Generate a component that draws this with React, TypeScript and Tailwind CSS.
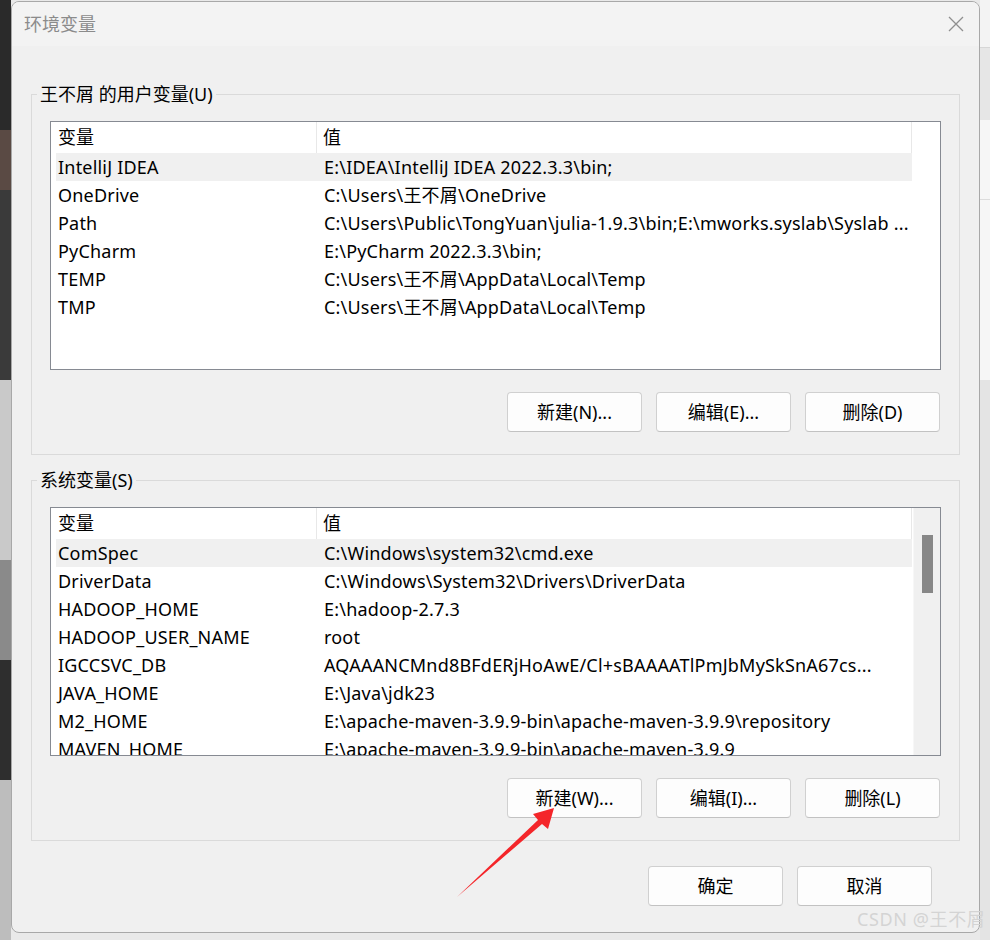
import React from "react"

const userVars: [string, string][] = [
    ["IntelliJ IDEA", "E:\\IDEA\\IntelliJ IDEA 2022.3.3\\bin;"],
    ["OneDrive", "C:\\Users\\王不屑\\OneDrive"],
    ["Path", "C:\\Users\\Public\\TongYuan\\julia-1.9.3\\bin;E:\\mworks.syslab\\Syslab ..."],
    ["PyCharm", "E:\\PyCharm 2022.3.3\\bin;"],
    ["TEMP", "C:\\Users\\王不屑\\AppData\\Local\\Temp"],
    ["TMP", "C:\\Users\\王不屑\\AppData\\Local\\Temp"],
]

const systemVars: [string, string][] = [
    ["ComSpec", "C:\\Windows\\system32\\cmd.exe"],
    ["DriverData", "C:\\Windows\\System32\\Drivers\\DriverData"],
    ["HADOOP_HOME", "E:\\hadoop-2.7.3"],
    ["HADOOP_USER_NAME", "root"],
    ["IGCCSVC_DB", "AQAAANCMnd8BFdERjHoAwE/Cl+sBAAAATlPmJbMySkSnA67cs..."],
    ["JAVA_HOME", "E:\\Java\\jdk23"],
    ["M2_HOME", "E:\\apache-maven-3.9.9-bin\\apache-maven-3.9.9\\repository"],
    ["MAVEN_HOME", "E:\\apache-maven-3.9.9-bin\\apache-maven-3.9.9"],
]

function WinButton({ label }: { label: string }) {
    return (
        <button className="flex h-[40px] w-[135px] items-center justify-center rounded-[4px] border border-[#d0d0d0] border-b-[#c2c2c2] bg-[#fdfdfd] text-[18px] text-black">
            {label}
        </button>
    )
}

// 变量列表（带表头，可选滚动条）
function VarList({ rows, scroll }: { rows: [string, string][]; scroll?: boolean }) {
    return (
        <div className="flex h-[249px] overflow-hidden border border-[#868a92] bg-white">
            <div className="flex w-[861px] flex-col">
                <div className="flex h-[31px] shrink-0 items-center border-r border-[#e8e8e8]">
                    <div className="flex h-full w-[266px] items-center border-r border-[#e8e8e8] pl-[7px]">
                        变量
                    </div>
                    <div className="pl-[6px]">值</div>
                </div>
                {rows.map(([name, value], i) => (
                    <div
                        key={name}
                        className={
                            "ml-[5px] flex h-[28px] shrink-0 items-center whitespace-nowrap tracking-[0.2px] " +
                            (i === 0 ? "bg-[#f0f0f0]" : "")
                        }
                    >
                        <div className="w-[261px] pl-[2px]">{name}</div>
                        <div className="pl-[7px]">{value}</div>
                    </div>
                ))}
            </div>
            {scroll && (
                <div className="ml-[1px] flex w-[27px] justify-center border-l border-[#f7f7f7] bg-[#f0f0f0] pt-[27px]">
                    <div className="h-[58px] w-[11px] bg-[#878787]" />
                </div>
            )}
        </div>
    )
}

function Group({
    title,
    rows,
    buttons,
    scroll,
}: {
    title: string
    rows: [string, string][]
    buttons: string[]
    scroll?: boolean
}) {
    return (
        <fieldset className="border border-[#dadada]">
            <legend className="ml-[5px] px-[3px] text-[18px] leading-[24px]">{title}</legend>
            <div className="flex flex-col px-[18px] pt-[15px] pb-[22px]">
                <VarList rows={rows} scroll={scroll} />
                <div className="mt-[22px] flex justify-end gap-[14px] pr-[1px]">
                    {buttons.map((b) => (
                        <WinButton key={b} label={b} />
                    ))}
                </div>
            </div>
        </fieldset>
    )
}

export default function App() {
    return (
        <div className="relative flex h-[940px] w-[990px] overflow-hidden bg-[#e9e9e9] font-['Segoe_UI','Noto_Sans','Noto_Sans_CJK_SC',sans-serif] text-[18px] text-black">
            {/* 左侧背景（桌面） */}
            <div className="flex w-[11px] shrink-0 flex-col">
                <div className="h-[130px] bg-[#2a2a2a]" />
                <div className="h-[60px] bg-[#5a4a44]" />
                <div className="h-[190px] bg-[#3a3a3a]" />
                <div className="h-[180px] bg-[#c9c9c9]" />
                <div className="h-[100px] bg-[#8a8a8a]" />
                <div className="h-[120px] bg-[#2e2e2e]" />
                <div className="flex-1 bg-[#bdbdbd]" />
            </div>

            {/* 对话框 */}
            <div className="mt-[1px] flex h-[932px] w-[969px] shrink-0 flex-col overflow-hidden rounded-[8px] border border-[#a8a8a8] bg-[#f0f0f0]">
                <div className="flex h-[44px] shrink-0 items-center justify-between bg-[#f3f3f3] pl-[12px] pr-[14px]">
                    <span className="text-[18px] text-[#8b8b8b]">环境变量</span>
                    <svg width="18" height="18" viewBox="0 0 18 18" className="mt-[-1px]">
                        <path d="M2 2 L16 16 M16 2 L2 16" stroke="#8f8f8f" strokeWidth="1.3" />
                    </svg>
                </div>

                <div className="flex flex-col px-[19px] pt-[36px]">
                    <Group
                        title="王不屑 的用户变量(U)"
                        rows={userVars}
                        buttons={["新建(N)...", "编辑(E)...", "删除(D)"]}
                    />
                    <div className="h-[13px]" />
                    <Group
                        title="系统变量(S)"
                        rows={systemVars}
                        buttons={["新建(W)...", "编辑(I)...", "删除(L)"]}
                        scroll
                    />
                    <div className="mt-[25px] flex justify-end gap-[14px] pr-[28px]">
                        <WinButton label="确定" />
                        <WinButton label="取消" />
                    </div>
                </div>
            </div>

            {/* 右侧背景窗口 */}
            <div className="flex w-[10px] shrink-0 flex-col">
                <div className="h-[48px] border-b border-[#d6d6d6] bg-[#f3f3f3]" />
                <div className="h-[72px] bg-[#e6e6e6]" />
                <div className="h-[80px] border-b border-[#dcdcdc] bg-[#f6f6f6]" />
                <div className="h-[180px] bg-[#f6f6f6]" />
                <div className="flex-1 bg-[#e4e4e4]" />
            </div>

            {/* 红色箭头标注 */}
            <svg className="pointer-events-none absolute left-0 top-0" width="990" height="940">
                <polygon
                    points="457,897 538,820 533,814 554,808 548,829 542,824"
                    fill="#f4262a"
                />
            </svg>

            {/* 水印 */}
            <div className="pointer-events-none absolute left-[857px] top-[906px] text-[18px] tracking-[0.6px] text-[#d4d4d4]">
                CSDN @王不屑
            </div>
        </div>
    )
}
